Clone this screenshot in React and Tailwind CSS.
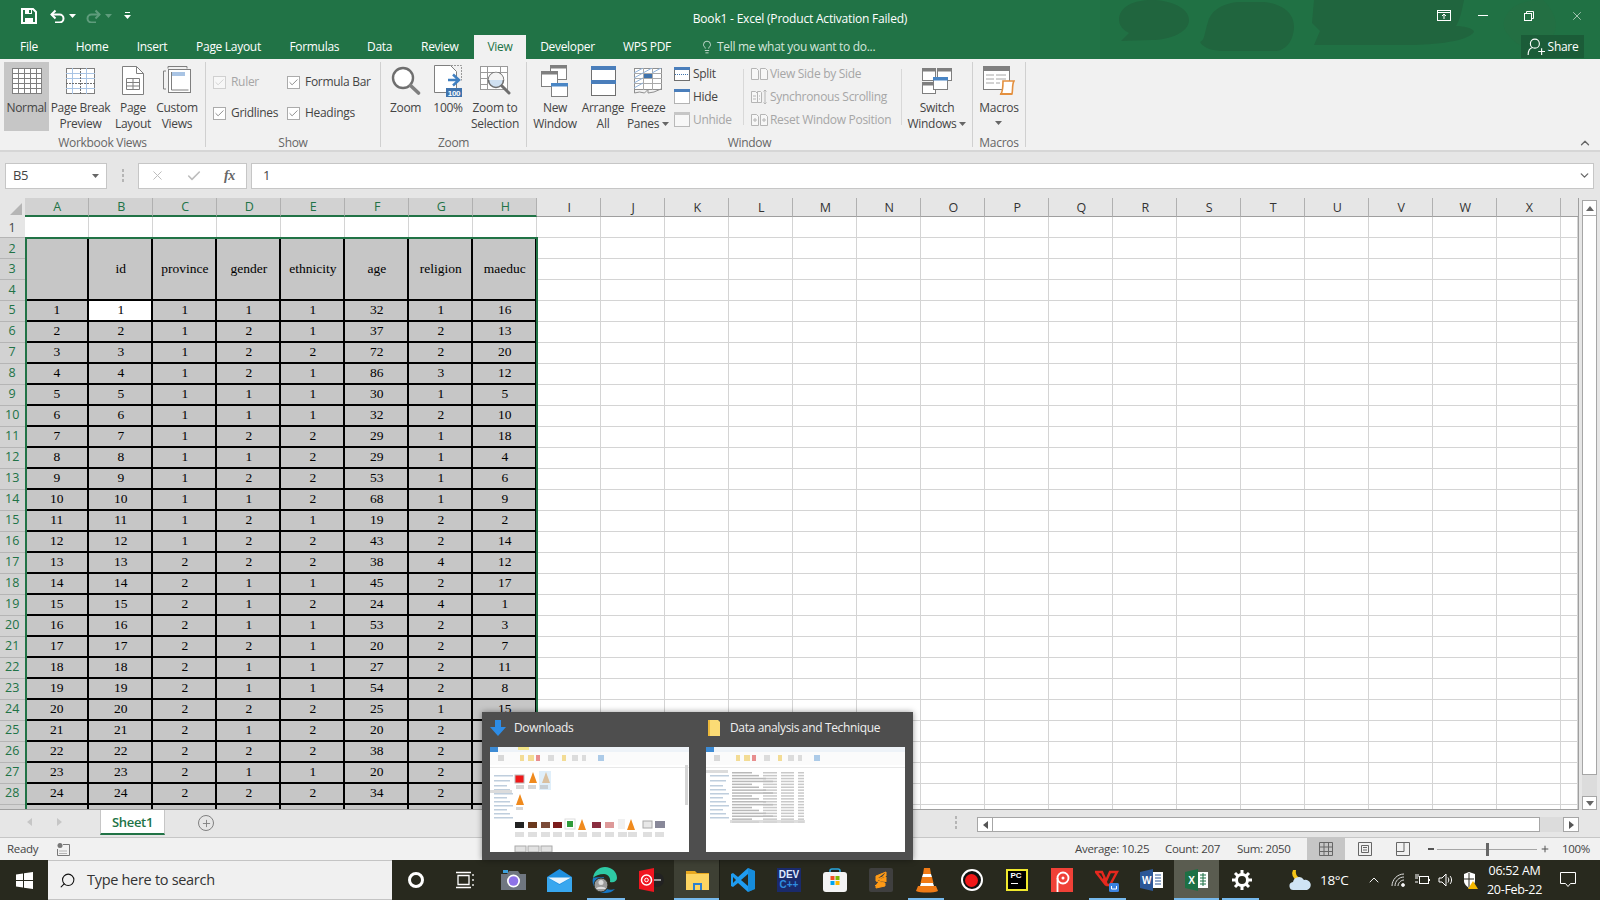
import React from "react";
import { Search, ChevronUp, ChevronDown, X, Check, Plus, Lightbulb } from "lucide-react";

const DATA = [
  [1,1,1,1,1,32,1,16],[2,2,1,2,1,37,2,13],[3,3,1,2,2,72,2,20],[4,4,1,2,1,86,3,12],[5,5,1,1,1,30,1,5],
  [6,6,1,1,1,32,2,10],[7,7,1,2,2,29,1,18],[8,8,1,1,2,29,1,4],[9,9,1,2,2,53,1,6],[10,10,1,1,2,68,1,9],
  [11,11,1,2,1,19,2,2],[12,12,1,2,2,43,2,14],[13,13,2,2,2,38,4,12],[14,14,2,1,1,45,2,17],[15,15,2,1,2,24,4,1],
  [16,16,2,1,1,53,2,3],[17,17,2,2,1,20,2,7],[18,18,2,1,1,27,2,11],[19,19,2,1,1,54,2,8],[20,20,2,2,2,25,1,15],
  [21,21,2,1,2,20,2,""],[22,22,2,2,2,38,2,""],[23,23,2,1,1,20,2,""],[24,24,2,2,2,34,2,""],["","","","","","","",""],
];
const HEAD = ["", "id", "province", "gender", "ethnicity", "age", "religion", "maeduc"];
const COLS_SEL = "ABCDEFGH".split("");
const COLS = "IJKLMNOPQRSTUVWX".split("");

const Caret = ({ className = "" }) => (
  <svg width="7" height="4" viewBox="0 0 7 4" className={className}><path d="M0 0h7L3.5 4z" fill="currentColor" /></svg>
);

const Win = ({ x, y, w, h, head = "#7f7f7f", hh = 3.5, stroke = "#7f7f7f", fill = "#fff" }) => (
  <g>
    <rect x={x + 0.5} y={y + 0.5} width={w} height={h} fill={fill} stroke={stroke} />
    <rect x={x} y={y} width={w + 1} height={hh} fill={head} />
  </g>
);

const IconNormal = () => (
  <svg width="30" height="26" viewBox="0 0 30 26" fill="none" stroke="#7f7f7f">
    <rect x=".5" y=".5" width="29" height="25" fill="#fff" />
    {[5.5, 10.5, 15.5, 20.5].map((y) => <path key={y} d={`M0 ${y}h30`} />)}
    {[6.5, 12.5, 18.5, 24.5].map((x) => <path key={x} d={`M${x} 0v26`} />)}
  </svg>
);
const IconBreak = () => (
  <svg width="29" height="26" viewBox="0 0 29 26" fill="none">
    <rect x=".5" y=".5" width="28" height="25" fill="#fff" stroke="#7f7f7f" />
    {[5.5, 10.5, 20.5].map((y) => <path key={y} d={`M0 ${y}h29`} stroke="#a9c4e4" />)}
    {[6.5, 20.5].map((x) => <path key={x} d={`M${x} 0v26`} stroke="#a9c4e4" />)}
    <path d="M14.5 0v26" stroke="#6d6d6d" strokeDasharray="2 1" />
    <path d="M0 15.5h29" stroke="#6d6d6d" strokeDasharray="2 1" />
  </svg>
);
const IconPage = () => (
  <svg width="22" height="29" viewBox="0 0 22 29" fill="none" stroke="#7f7f7f">
    <path d="M.5.5h14l7 7v21H.5z" fill="#fff" />
    <path d="M14.5.5v7h7" />
    <path d="M4.5 12.5h13v11h-13zM4.5 16.5h13M4.5 20h13M11 12.5v11" />
  </svg>
);
const IconCustom = () => (
  <svg width="29" height="29" viewBox="0 0 29 29" fill="none" stroke="#7f7f7f">
    <path d="M.5 5v18M3 5H.5M3 23H.5M5 .5h19M5 .5v2M24 .5v2" />
    <rect x="5.5" y="3.5" width="22" height="23" fill="#fff" />
    <rect x="8" y="6" width="14" height="4" fill="#a9c4e4" stroke="none" />
    <path d="M8.5 6v18h17" />
  </svg>
);
const IconMag = () => (
  <svg width="30" height="29" viewBox="0 0 30 29" fill="none">
    <circle cx="12" cy="12" r="10" stroke="#6f6f6f" strokeWidth="2.4" fill="#fff" />
    <path d="M19.5 19.5l8 7.5" stroke="#7f7f7f" strokeWidth="3.6" strokeLinecap="round" />
  </svg>
);
const Icon100 = () => (
  <svg width="29" height="32" viewBox="0 0 29 32">
    <path d="M.5.5h16l6 6v21H.5z" fill="#fff" stroke="#7f7f7f" />
    <path d="M17 .5h10.5v15" fill="none" stroke="#9a9a9a" strokeDasharray="2 1" />
    <path d="M14 15h10M19 9.5l6 5.5-6 5.5" fill="none" stroke="#3f7fc1" strokeWidth="2.5" />
    <rect x="12" y="23" width="16" height="9" fill="#3f73ad" />
    <text x="20" y="30.5" fontSize="8" fontWeight="700" fill="#fff" textAnchor="middle" fontFamily="Liberation Sans">100</text>
  </svg>
);
const IconZoomSel = () => (
  <svg width="31" height="29" viewBox="0 0 31 29" fill="none" stroke="#9a9a9a">
    <rect x=".5" y=".5" width="27" height="23" fill="#fff" />
    <path d="M0 6.5h28M0 12.5h8M0 18.5h8M7.5 0v24M20.5 0v8" />
    <circle cx="16" cy="14" r="7.5" fill="#cfe0f1" stroke="#6f6f6f" strokeWidth="1.6" />
    <path d="M8.5 14a7.5 7.5 0 0 1 15 0z" fill="#f4f4f4" stroke="none" />
    <path d="M22 20l7 7" stroke="#6f6f6f" strokeWidth="3" strokeLinecap="round" />
  </svg>
);
const IconNewWin = () => (
  <svg width="28" height="32" viewBox="0 0 28 32">
    <Win x={9} y={0} w={16} h={14} head="#7f7f7f" />
    <Win x={0} y={6} w={16} h={15} head="#7f7f7f" />
    <Win x={10} y={18} w={16} h={13} head="#4a86c5" />
  </svg>
);
const IconArrange = () => (
  <svg width="25" height="30" viewBox="0 0 25 30">
    <Win x={0} y={0} w={24} h={14} head="#4a7ebb" hh={4} stroke="#6f6f6f" />
    <Win x={0} y={14} w={24} h={15} head="#4a7ebb" hh={4} stroke="#6f6f6f" />
  </svg>
);
const IconFreeze = () => (
  <svg width="28" height="26" viewBox="0 0 28 26" fill="none">
    <rect x=".5" y=".5" width="27" height="21" fill="#fff" stroke="#8f8f8f" />
    {[5.5, 10.5, 15.5].map((y) => <path key={y} d={`M0 ${y}h28`} stroke="#a9a9a9" />)}
    {[9.5, 18.5].map((x) => <path key={x} d={`M${x} 0v22`} stroke="#a9a9a9" />)}
    <path d="M0 5l9-5M0 10l9-5M0 15l9-5M0 20l9-5M9 5l9-5M18 5l9-5" stroke="#8fb1d8" />
    <rect x="10" y="6" width="8" height="4" fill="#3f73ad" />
    <path d="M.5 21v4l5-1 5 1 3-3M14 21v4l6-1 7-3" stroke="#8f8f8f" />
  </svg>
);
const IconSplit = () => (
  <svg width="16" height="14" viewBox="0 0 16 14">
    <rect x=".5" y=".5" width="15" height="13" fill="#fff" stroke="#6f6f6f" />
    <rect width="16" height="3" fill="#4a7ebb" />
    <path d="M1 7.5h14" stroke="#3f73ad" strokeDasharray="1 1" />
  </svg>
);
const IconHide = () => (
  <svg width="16" height="15" viewBox="0 0 16 15">
    <rect x=".5" y=".5" width="15" height="14" fill="#fff" stroke="#6f6f6f" strokeDasharray="1 1" />
    <rect width="16" height="3" fill="#4a7ebb" />
  </svg>
);
const IconUnhide = () => (
  <svg width="16" height="15" viewBox="0 0 16 15">
    <rect x=".5" y=".5" width="15" height="14" fill="#f7f7f7" stroke="#b9b9b9" />
    <rect width="16" height="3" fill="#c6c6c6" />
  </svg>
);
const IconSide = () => (
  <svg width="17" height="12" viewBox="0 0 17 12" fill="#f7f7f7" stroke="#b5b5b5">
    <path d="M.5.5h5l2 2v9h-7zM9.5.5h5l2 2v9h-7z" />
  </svg>
);
const IconSync = () => (
  <svg width="16" height="16" viewBox="0 0 16 16" fill="#f7f7f7" stroke="#b5b5b5">
    <path d="M.5 2.5h4l2 2v9h-6zM6.5 2.5h3l1 1v10h-4zM2 7h3M2 10h3M8 7h1M8 10h1" />
    <path d="M14 1v14M12.5 2.5L14 1l1.5 1.5M12.5 13.5L14 15l1.5-1.5" fill="none" />
  </svg>
);
const IconReset = () => (
  <svg width="17" height="12" viewBox="0 0 17 12" fill="#f7f7f7" stroke="#b5b5b5">
    <path d="M.5.5h5l2 2v9h-7zM9.5.5h5l2 2v9h-7zM2 6h4M4 4v4M11 6h4M13 4v4" />
  </svg>
);
const IconSwitch = () => (
  <svg width="30" height="26" viewBox="0 0 30 26">
    <Win x={0} y={0} w={13} h={12} />
    <Win x={15} y={0} w={14} h={12} />
    <Win x={0} y={14} w={13} h={11} />
    <Win x={11} y={9} w={14} h={12} head="#4a86c5" />
  </svg>
);
const IconMacros = () => (
  <svg width="32" height="29" viewBox="0 0 32 29">
    <rect x=".5" y=".5" width="26" height="23" fill="#fff" stroke="#7f7f7f" />
    <rect width="27" height="5" fill="#7f7f7f" />
    <path d="M3 9h8M13 9h10M3 13h8M13 13h10M3 17h8M13 17h4" stroke="#a6a6a6" />
    <path d="M20 15h11c-2 3-1 8-2 13H18c2-3 2-9 2-13z" fill="#fff" stroke="#e3903f" strokeWidth="1.6" />
    <path d="M17 27h12v2H17z" fill="#e3903f" />
  </svg>
);

const Big = ({ w, icon, lines, active, caret }) => (
  <div style={{ width: w }} className={`flex flex-col items-center h-[69px] shrink-0 ${active ? "bg-[#c6c6c6]" : ""}`}>
    <div className="h-[38px] shrink-0 flex items-center justify-center pb-[1px]">{icon}</div>
    <div className="text-center leading-[16px] whitespace-nowrap shrink-0">
      {lines.map((l, i) => <div key={i} className="flex items-center justify-center gap-[3px] h-[16px]">{l}{caret && i === lines.length - 1 ? <Caret className="text-[#666]" /> : null}</div>)}
    </div>
  </div>
);

const Group = ({ w, label, children }) => (
  <div style={{ width: w }} className="flex flex-col shrink-0 h-[85px] border-r border-[#d0d0d0]">
    <div className="flex shrink-0 h-[72px]">{children}</div>
    <div className="mt-[1px] shrink-0 h-[16px] text-center text-[#666] leading-[16px]">{label}</div>
  </div>
);

const CheckRow = ({ label, on = true, dim, w }) => (
  <div style={{ width: w }} className={`h-[18px] flex items-center gap-[5px] ${dim ? "text-[#a6a6a6]" : ""}`}>
    <span className={`w-[13px] h-[13px] border ${dim ? "border-[#d0d0d0] bg-[#f7f7f7]" : "border-[#ababab] bg-white"} flex items-center justify-center`}>
      {on && <Check size={11} strokeWidth={1.6} className={dim ? "text-[#c6c6c6]" : "text-[#666]"} />}
    </span>
    <span className="whitespace-nowrap">{label}</span>
  </div>
);

const SmallRow = ({ icon, label, dim, iw = 19 }) => (
  <div className={`h-[23px] flex items-center whitespace-nowrap ${dim ? "text-[#a6a6a6]" : ""}`}>
    <span style={{ width: iw }} className="flex items-center shrink-0">{icon}</span>{label}
  </div>
);

const TABS = [
  ["Home", 68], ["Insert", 52], ["Page Layout", 101], ["Formulas", 70.6], ["Data", 60], ["Review", 60.4],
];

const Blobs = () => (
  <svg className="absolute left-0 top-0 pointer-events-none" width="1600" height="59" viewBox="0 0 1600 59">
    <rect x="1100" width="500" height="59" fill="#1f6c41" opacity=".35" />
    <path d="M1119 20c0-14 16-20 32-20 20 0 38 8 38 20 0 12-18 20-38 20l-30 1 8-8c-6-3-10-8-10-13z" fill="#20653e" />
    <path d="M1208 22c3-12 16-20 34-20h18c20 0 34 10 34 24 0 12-6 24-18 25h-50c-12 0-22-2-26-9 5-2 4-8 8-20z" fill="#20653e" />
    <path d="M1314 0h150c-2 10-4 20-8 26 6 0 18 2 18 6-8 11-48 13-68 13h-92l6-14-8-8z" fill="#20653e" />
    <path d="M1505 18c6-14 20-18 38-18 12 12 16 24 10 36-8 16-30 14-40 4-6-6-12-12-8-22z" fill="#236f43" />
  </svg>
);

const TitleBar = () => (
  <div className="relative h-[59px] bg-[#217346] text-white shrink-0">
    <Blobs />
    <div className="relative h-[35px] flex items-center justify-center text-[12px] pt-[2px]">
      <div className="absolute left-0 top-0 h-[31px] flex items-center">
        <svg className="ml-[21px]" width="16" height="16" viewBox="0 0 16 16"><path d="M1 1h11l3 3v11H1z" fill="none" stroke="#fff" strokeWidth="2" /><path d="M4 1h7v5H4zM4 10h8v5H4z" fill="#fff" /><path d="M8 2h2v3H8z" fill="#217346" /></svg>
        <svg className="ml-[13px]" width="15" height="14" viewBox="0 0 15 14" fill="none" stroke="#fff" strokeWidth="2"><path d="M1.5 5.5h8a4 4 0 0 1 0 8H5" /><path d="M5.5 1.5l-4 4 4 4" /></svg>
        <Caret className="ml-[4px] text-white" />
        <svg className="ml-[10px]" width="15" height="14" viewBox="0 0 15 14" fill="none" stroke="#5f9c7c" strokeWidth="2"><path d="M13.5 5.500h-8a4 4 0 0 0 0 8H10" /><path d="M9.500 1.500l4 4-4 4" /></svg>
        <Caret className="ml-[4px] text-[#5f9c7c]" />
        <svg className="ml-[12px]" width="7" height="8" viewBox="0 0 7 8" fill="#fff"><path d="M1 0h5v1H1zM0 3h7L3.500 7z" /></svg>
      </div>
      <span className="tracking-[-0.2px]">Book1 - Excel (Product Activation Failed)</span>
      <div className="absolute right-0 top-0 h-[31px] flex items-center">
        <svg className="mr-[27px]" width="14" height="11" viewBox="0 0 14 11" fill="none" stroke="#fff"><rect x=".5" y=".5" width="13" height="10" /><path d="M1 2.500h12M7 9V4M5 6l2-2 2 2" /></svg>
        <span className="w-[10px] h-px bg-white mr-[36px]" />
        <svg className="mr-[36px]" width="10" height="10" viewBox="0 0 10 10" fill="none" stroke="#fff"><rect x=".5" y="2.500" width="7" height="7" /><path d="M2.500 2.500v-2h7v7h-2" /></svg>
        <X size={14} strokeWidth={1} className="mr-[16px]" />
      </div>
    </div>
    <div className="relative h-[24px] flex items-stretch text-[12px]">
      <div className="w-[58px] flex items-center justify-center">File</div>
      {TABS.map(([t, w]) => <div key={t} style={{ width: w }} className="flex items-center justify-center">{t}</div>)}
      <div className="ml-[4px] w-[52px] bg-[#f1f1f1] text-[#217346] flex items-center justify-center">View</div>
      <div className="w-[83px] flex items-center justify-center">Developer</div>
      <div className="w-[76px] flex items-center justify-center">WPS PDF</div>
      <div className="ml-[15px] flex items-center gap-[3px] text-[#d5e6dc]">
        <Lightbulb size={14} strokeWidth={1.2} className="text-white" />
        <span>Tell me what you want to do...</span>
      </div>
      <div className="absolute left-[1521px] top-0 w-[63px] h-[23px] bg-[#1b5c38] flex items-center justify-center gap-[3px] pt-[1px]">
        <svg width="18" height="18" viewBox="0 0 16 16" fill="none" stroke="#fff"><circle cx="7" cy="5" r="4" /><path d="M1 15c0-4 2-6 4-6.500M10 12h6M13 9v6" /></svg>
        <span>Share</span>
      </div>
    </div>
  </div>
);

const Ribbon = () => (
  <div className="h-[93px] shrink-0 bg-[#f1f1f1] border-b-2 border-[#d6d6d6] flex pt-[3px] text-[12px] text-[#444] relative">
    <Group w={206} label="Workbook Views">
      <span className="w-[4px] shrink-0" />
      <Big w={45} active icon={<IconNormal />} lines={["Normal"]} />
      <Big w={63} icon={<IconBreak />} lines={["Page Break", "Preview"]} />
      <Big w={42} icon={<IconPage />} lines={["Page", "Layout"]} />
      <Big w={46} icon={<IconCustom />} lines={["Custom", "Views"]} />
    </Group>
    <Group w={175} label="Show">
      <div className="pl-[7px] pt-[11px] flex flex-col gap-[13px]">
        <CheckRow label="Ruler" dim w={74} />
        <CheckRow label="Gridlines" w={74} />
      </div>
      <div className="pt-[11px] flex flex-col gap-[13px]">
        <CheckRow label="Formula Bar" />
        <CheckRow label="Headings" />
      </div>
    </Group>
    <Group w={146} label="Zoom">
      <span className="w-[2px] shrink-0" />
      <Big w={45} icon={<IconMag />} lines={["Zoom"]} />
      <Big w={40} icon={<Icon100 />} lines={["100%"]} />
      <Big w={54} icon={<IconZoomSel />} lines={["Zoom to", "Selection"]} />
    </Group>
    <Group w={446} label="Window">
      <span className="w-[3px] shrink-0" />
      <Big w={50} icon={<IconNewWin />} lines={["New", "Window"]} />
      <Big w={46} icon={<IconArrange />} lines={["Arrange", "All"]} />
      <Big w={44} icon={<IconFreeze />} lines={["Freeze", "Panes"]} caret />
      <div className="w-[73px] pl-[4px] shrink-0">
        <SmallRow icon={<IconSplit />} label="Split" />
        <SmallRow icon={<IconHide />} label="Hide" />
        <SmallRow icon={<IconUnhide />} label="Unhide" dim />
      </div>
      <div className="w-[158px] shrink-0 border-l border-[#d8d8d8] h-[56px] mt-[7px] pl-[7px]">
        <div className="-mt-[7px]">
          <SmallRow icon={<IconSide />} label="View Side by Side" dim />
          <SmallRow icon={<IconSync />} label="Synchronous Scrolling" dim />
          <SmallRow icon={<IconReset />} label="Reset Window Position" dim />
        </div>
      </div>
      <div className="border-l border-[#d8d8d8] h-[56px] mt-[7px] pl-[5px]">
        <div className="-mt-[7px]"><Big w={60} icon={<IconSwitch />} lines={["Switch", "Windows"]} caret /></div>
      </div>
    </Group>
    <Group w={53} label="Macros">
      <Big w={52} icon={<IconMacros />} lines={["Macros", ""]} />
    </Group>
    <ChevronUp size={14} strokeWidth={2.2} className="absolute left-[1578px] top-[77px] text-[#666]" />
    <Caret className="absolute left-[995px] top-[62px] text-[#666]" />
  </div>
);

const FormulaBar = () => (
  <div className="h-[46px] shrink-0 bg-[#e6e6e6] flex items-center text-[13px] text-[#444] pt-[1px]">
    <div className="ml-[5px] w-[102px] h-[26px] bg-white border border-[#c6c6c6] flex items-center justify-between pl-[7px] pr-[7px]">
      <span>B5</span><Caret className="text-[#666]" />
    </div>
    <div className="w-[31px] flex flex-col items-center gap-[2px]">
      <span className="w-[2px] h-[3px] bg-[#b5b5b5]" /><span className="w-[2px] h-[3px] bg-[#b5b5b5]" /><span className="w-[2px] h-[3px] bg-[#b5b5b5]" />
    </div>
    <div className="w-[109px] h-[26px] bg-white border border-[#c6c6c6] flex items-center justify-between pl-[11px] pr-[11px] shrink-0">
      <X size={15} strokeWidth={1.6} className="text-[#bdbdbd]" />
      <Check size={16} strokeWidth={2.4} className="text-[#bdbdbd]" />
      <span className="font-['Liberation_Serif',serif] italic font-bold text-[#666] text-[14px]">fx</span>
    </div>
    <div className="ml-[4px] flex-1 h-[26px] bg-white border border-[#c6c6c6] flex items-center pl-[11px] mr-[6px] relative">
      <span>1</span>
      <ChevronDown size={13} strokeWidth={2.4} className="absolute right-[2px] text-[#666]" />
    </div>
  </div>
);

const Grid = () => <div className="border-r border-b border-[#d4d4d4] bg-white" />;

const Sheet = () => {
  const filler = (r) => Array.from({ length: 17 }, (_, i) => <Grid key={`${r}-${i}`} />);
  const RowH = ({ n, sel = true, pt = "" }) => (
    <div className={`flex items-center justify-center border-b border-[#b5b5b5] pr-[1px] text-[12.5px] tracking-normal ${pt} ${sel ? "bg-[#d2d2d2] text-[#217346]" : "bg-[#e6e6e6] text-[#444]"}`}>{n}</div>
  );
  const cellCls = "flex items-center justify-center pl-[1px] border-r-2 border-b-2 border-black font-['Liberation_Serif',serif] text-[13.5px] tracking-normal text-black";
  return (
    <div className="h-[612px] shrink-0 bg-[#e6e6e6] flex overflow-hidden">
      <div className="relative w-[1578.5px] h-[612px] overflow-hidden border-r border-b border-[#9f9f9f] shrink-0">
        <div className="grid grid-cols-[25.3px_repeat(24,64px)_17px] grid-rows-[18.5px_repeat(29,21px)] w-max">
          <div className="relative bg-[#e6e6e6]">
            <svg className="absolute left-[10px] top-[5px]" width="12" height="12" viewBox="0 0 12 12"><path d="M12 0v12H0z" fill="#b5b5b5" /></svg>
          </div>
          {COLS_SEL.map((c) => (
            <div key={c} className="flex items-center justify-center pl-[1px] pt-[3px] bg-[#d2d2d2] text-[#217346] text-[12.5px] tracking-normal border-r border-[#b0b0b0] border-b-2 border-b-[#217346]">{c}</div>
          ))}
          {COLS.map((c) => (
            <div key={c} className="flex items-center justify-center pl-[1px] pt-[3px] bg-[#e6e6e6] text-[#333] text-[12.5px] tracking-normal border-r border-[#b0b0b0] border-b border-b-[#9f9f9f]">{c}</div>
          ))}
          <div className="bg-[#e6e6e6] border-b border-[#9f9f9f]" />

          <RowH n={1} sel={false} pt="pt-[3px]" />
          {COLS_SEL.map((c) => <Grid key={`r1${c}`} />)}
          {filler("r1")}

          <RowH n={2} pt="pt-[3px]" />
          {HEAD.map((h, i) => (
            <div key={i} className={`row-span-3 bg-[#c6c6c6] ${cellCls} pt-[2px]`}>{h}</div>
          ))}
          {filler("r2")}
          <RowH n={3} pt="pt-[2px]" />
          {filler("r3")}
          <RowH n={4} pt="pt-[2px]" />
          {filler("r4")}

          {DATA.map((row, r) => (
            <React.Fragment key={r}>
              <RowH n={r + 5 === 29 ? "" : r + 5} />
              {row.map((v, c) => (
                <div key={c} className={`${cellCls} ${r === 0 && c === 1 ? "bg-white" : "bg-[#c6c6c6]"}`}>{v}</div>
              ))}
              {filler(`d${r}`)}
            </React.Fragment>
          ))}
        </div>
        <div className="absolute left-[25px] top-[39px] w-[513px] h-[600px] border-2 border-[#217346] pointer-events-none" />
      </div>
      <div className="w-[21.5px] h-[612px] flex flex-col items-start pt-[2px] pl-[3.5px]">
        <div className="w-[15px] h-[16px] bg-white border border-[#a6a6a6] flex items-center justify-center text-[#666]"><svg width="8" height="5" viewBox="0 0 8 5"><path d="M0 5h8L4 0z" fill="currentColor" /></svg></div>
        <div className="w-[15px] h-[559px] bg-white border-x border-b border-[#a6a6a6]" />
        <div className="w-[15px] h-[21px] bg-[#dcdcdc]" />
        <div className="w-[15px] h-[14px] bg-white border border-[#a6a6a6] flex items-center justify-center text-[#666]"><svg width="8" height="5" viewBox="0 0 8 5"><path d="M0 0h8L4 5z" fill="currentColor" /></svg></div>
      </div>
    </div>
  );
};

const SheetBar = () => (
  <div className="h-[28px] shrink-0 bg-[#e6e6e6] border-b border-[#c6c6c6] flex text-[13px]">
    <div className="w-[100px] flex items-center pl-[27px] gap-[25px] pb-[3px] text-[#c6c6c6]">
      <svg width="5" height="8" viewBox="0 0 5 8"><path d="M5 0v8L0 4z" fill="currentColor" /></svg>
      <svg width="5" height="8" viewBox="0 0 5 8"><path d="M0 0v8l5-4z" fill="currentColor" /></svg>
    </div>
    <div className="w-[65px] h-[25px] bg-white border-x border-[#c6c6c6] border-b-2 border-b-[#217346] flex items-center justify-center pt-[2px] font-semibold text-[#217346]">Sheet1</div>
    <div className="ml-[33px] mt-[5px] w-[16px] h-[16px] rounded-full border border-[#808080] flex items-center justify-center text-[#808080]"><Plus size={11} strokeWidth={2} /></div>
    <div className="ml-[734px] w-[16px] flex flex-col items-center justify-center gap-[2px] pb-[3px]">
      <span className="w-[2px] h-[3px] bg-[#b5b5b5]" /><span className="w-[2px] h-[3px] bg-[#b5b5b5]" /><span className="w-[2px] h-[3px] bg-[#b5b5b5]" />
    </div>
    <div className="ml-[13px] mt-[7px] h-[15px] flex w-[602px]">
      <div className="w-[16px] bg-white border border-[#a6a6a6] flex items-center justify-center text-[#555]"><svg width="5" height="8" viewBox="0 0 5 8"><path d="M5 0v8L0 4z" fill="currentColor" /></svg></div>
      <div className="w-[547px] bg-white border-y border-r border-[#a6a6a6]" />
      <div className="w-[23px] bg-[#dcdcdc]" />
      <div className="w-[16px] bg-white border border-[#a6a6a6] flex items-center justify-center text-[#555]"><svg width="5" height="8" viewBox="0 0 5 8"><path d="M0 0v8l5-4z" fill="currentColor" /></svg></div>
    </div>
  </div>
);

const StatusBar = () => (
  <div className="h-[22px] shrink-0 bg-[#f1f1f1] flex items-center text-[11.5px] text-[#444]">
    <span className="ml-[7px] w-[50px]">Ready</span>
    <svg width="13" height="13" viewBox="0 0 13 13" fill="none" stroke="#777"><circle cx="3" cy="2.500" r="2.500" fill="#777" stroke="none" /><path d="M6 1.500h6.500v11H.5V6" /><path d="M2.500 8h8M2.500 10.500h8" strokeDasharray="1 1" /></svg>
    <span className="ml-[1005px] w-[90px] whitespace-nowrap">Average: 10.25</span>
    <span className="w-[72px] whitespace-nowrap">Count: 207</span>
    <span className="w-[70px] whitespace-nowrap">Sum: 2050</span>
    <div className="w-[38px] h-[22px] bg-[#c6c6c6] flex items-center justify-center">
      <svg width="14" height="14" viewBox="0 0 14 14" fill="none" stroke="#666"><path d="M.5.5h13v13H.5zM.5 5h13M.5 9.500h13M5 .5v13M9.500.5v13" /></svg>
    </div>
    <div className="w-[39px] flex justify-center">
      <svg width="14" height="14" viewBox="0 0 14 14" fill="none" stroke="#666"><path d="M.5.5h13v13H.5zM3.500 3.500h7v7h-7zM5 5.500h4M5 8h4" /></svg>
    </div>
    <div className="w-[37px] flex justify-center">
      <svg width="14" height="14" viewBox="0 0 14 14" fill="none" stroke="#666"><path d="M.5.5h13v13H.5zM.5 9.500h7.500V.5" /></svg>
    </div>
    <span className="ml-[7px] w-[6px] h-[2px] bg-[#555]" />
    <div className="relative ml-[3px] w-[100px] h-px bg-[#a6a6a6]"><span className="absolute left-[49px] -top-[6px] w-[3px] h-[13px] bg-[#666]" /></div>
    <Plus size={10} strokeWidth={2.4} className="ml-[3px] text-[#555]" />
    <span className="ml-[12px]">100%</span>
  </div>
);

const Mini = ({ kind }) => (
  <svg width="199" height="105" viewBox="0 0 199 105" className="bg-white block">
    <g className="blur-[0.4px]">
      <rect width="199" height="5" fill="#eef3f8" />
      <rect y="0" width="8" height="5" fill="#3d8bd4" />
      {kind === 0 && <rect x="28" y="0" width="11" height="3" fill="#f3e58a" />}
      <rect y="5" width="199" height="13" fill="#fbfbfb" />
      {[8, 30, 38, 46, 58, 72, 82, 92, 108].map((x, i) => <rect key={i} x={x} y={8} width={i % 2 ? 4 : 6} height={6} fill={["#c9c9c9", "#efcf6a", "#efcf6a", "#e06060", "#cfcfcf", "#efcf6a", "#cfcfcf", "#cfcfcf", "#8bb7e0"][i]} opacity=".7" />)}
      <rect y="20" width="199" height="1" fill="#e8e8e8" />
      {[26, 31, 36, 40, 44, 48, 52, 56, 60, 64, 68].map((y) => <rect key={y} x={4} y={y + 2} width={13 + (y % 3) * 3} height="1.500" fill="#a9bdd1" opacity=".75" />)}
      <rect x="0" y={kind === 0 ? 43 : 23} width="22" height="3" fill="#dcdcdc" />
      {kind === 0 ? (
        <g>
          <rect x="25" y="28" width="9" height="8" fill="#f01818" stroke="#bbb" />
          <path d="M43 25l4 11h-8z" fill="#f08a1d" /><path d="M56 25l4 11h-8z" fill="#f08a1d" />
          <rect x="49" y="24" width="12" height="19" fill="#cce4f7" opacity=".6" />
          <path d="M30 47l4 11h-8z" fill="#f08a1d" />
          {[26, 38, 50].map((x) => <rect key={x} x={x} y={38} width="8" height="4" fill="#b5b5b5" opacity=".55" />)}
          <rect x="26" y="60" width="7" height="3" fill="#b5b5b5" opacity=".55" />
          {[25, 38, 51, 63].map((x, i) => <rect key={x} x={x} y={75} width="9" height="6" fill={["#222", "#6b3a1e", "#7b4b38", "#7c1c1c"][i]} />)}
          <rect x="75" y="72" width="10" height="10" fill="#fff" stroke="#ddd" /><rect x="77" y="74" width="6" height="6" fill="#2f9b3b" />
          <path d="M92 72l4 11h-8z" fill="#f08a1d" />
          <rect x="102" y="75" width="9" height="6" fill="#8a2d3f" /><rect x="115" y="75" width="9" height="6" fill="#d99" />
          <rect x="128" y="72" width="7" height="10" fill="#f0f0f0" />
          <path d="M141 72l4 11h-8z" fill="#f08a1d" />
          <rect x="153" y="74" width="9" height="7" fill="#e8e8e8" stroke="#aaa" /><rect x="165" y="74" width="10" height="7" fill="#889" />
          {[25, 38, 51, 63, 75, 88, 102, 115, 128, 138, 153, 165].map((x) => <rect key={x} x={x} y={85} width="9" height="5" fill="#b9b9b9" opacity=".45" />)}
          {[30, 43, 56].map((x) => <rect key={x} x={x - 5} y={99} width="11" height="6" fill="#e2e2e2" stroke="#aaa" />)}
          <rect x="195" y="18" width="3" height="40" fill="#d5d5d5" />
        </g>
      ) : (
        <g>
          {Array.from({ length: 18 }, (_, i) => (
            <g key={i}>
              <rect x="26" y={25 + i * 2.900} width={20 + (i * 7) % 28} height="1.500" fill="#a8a8a8" opacity=".8" />
              <rect x="57" y={25 + i * 2.900} width="14" height="1.500" fill="#bbb" opacity=".8" />
              <rect x="75" y={25 + i * 2.900} width="13" height="1.500" fill="#bbb" opacity=".8" />
              <rect x="92" y={25 + i * 2.900} width="6" height="1.500" fill="#bbb" opacity=".8" />
            </g>
          ))}
          <rect x="24" y="73" width="75" height="3" fill="#d6d6d6" opacity=".8" />
        </g>
      )}
    </g>
  </svg>
);

const Flyout = () => (
  <div className="absolute left-[482px] top-[712px] w-[431px] h-[148px] bg-[#4e4e4e] shadow-[0_0_6px_rgba(0,0,0,0.4)] text-[#f0f0f0] text-[12px] tracking-[-0.35px] flex gap-[17px] px-[8px]">
    <div className="w-[199px]">
      <div className="h-[35px] pb-[3px] flex items-center gap-[8px]">
        <svg width="16" height="16" viewBox="0 0 16 16"><path d="M5 0h6v7h5l-8 9-8-9h5z" fill="#2d8ce6" /></svg>
        <span>Downloads</span>
      </div>
      <Mini kind={0} />
    </div>
    <div className="w-[199px]">
      <div className="h-[35px] pb-[3px] flex items-center gap-[10px] pl-[2px]">
        <svg width="12" height="16" viewBox="0 0 12 16"><path d="M0 0h10l2 2v14H0z" fill="#fbdb75" /><path d="M0 0h2v16H0z" fill="#edb93a" /></svg>
        <span>Data analysis and Technique</span>
      </div>
      <Mini kind={1} />
    </div>
  </div>
);

const Slot = ({ children, w = 46, bg }) => (
  <div style={{ width: w }} className={`relative h-[40px] flex items-center justify-center shrink-0 ${bg || ""}`}>
    {children}
  </div>
);

const Taskbar = () => (
  <div className="h-[40px] shrink-0 bg-[#28291e] flex items-stretch text-white">
    <div className="w-[48px] flex items-center justify-center">
      <svg width="17" height="17" viewBox="0 0 17 17" fill="#fff"><path d="M0 2.400L7 1.400v6.600H0zM8 1.200L17 0v8H8zM0 9h7v6.600l-7-1zM8 9h9v8l-9-1.200z" /></svg>
    </div>
    <div className="w-[344px] bg-[#f0f0f0] border-y border-[#c4c4c4] flex items-center text-[#333] text-[14.5px]">
      <Search size={17} strokeWidth={1.5} className="ml-[11px] -scale-x-100 text-[#111]" />
      <span className="ml-[11px]">Type here to search</span>
    </div>
    <Slot w={47}><span className="w-[16px] h-[16px] rounded-full border-[3px] border-white" /></Slot>
    <Slot w={51}>
      <svg width="18" height="18" viewBox="0 0 18 18" fill="none" stroke="#fff" strokeWidth="1.300"><path d="M2 4.500h11v9H2zM0 1.500h15M0 16.500h15M17 3v2M17 8v2M17 13v2" /></svg>
    </Slot>
    <Slot>
      <svg width="25" height="20" viewBox="0 0 25 20"><path d="M0 4h6l2-3h9l2 3h6v16H0z" fill="#6f7680" /><rect x="2" y="0" width="5" height="3" fill="#3ca0dc" /><circle cx="12.500" cy="11" r="6.500" fill="#fff" /><circle cx="12.500" cy="11" r="4.800" fill="#8e72e8" /></svg>
    </Slot>
    <Slot>
      <svg width="25" height="23" viewBox="0 0 25 23"><path d="M0 8L12.500 0 25 8v15H0z" fill="#1d8fe0" /><path d="M0 8l12.500 8L25 8v15H0z" fill="#38a7ef" /><path d="M1 8.500h23L12.500 15z" fill="#e8f4fd" /></svg>
    </Slot>
    <Slot>
      <svg width="26" height="26" viewBox="0 0 26 26"><path d="M1 11C2 4 7 0 13 0c7 0 12 5 12 11 0 3-3 5-7 4 1-4-2-8-6-8-5 0-9 2-11 4z" fill="#2ec9a4" /><path d="M1 11c-2 8 4 15 12 15 4 0 7-1 10-4-5 2-10 0-12-4-1-3 0-6 1-8-5 0-9 0-11 1z" fill="#1677c6" /><circle cx="9" cy="18" r="7" fill="#9a9a9a" stroke="#28291e" /><circle cx="9" cy="15.500" r="2.500" fill="#ddd" /><path d="M4 22c1-3 9-3 10 0z" fill="#ddd" /></svg>
      <span className="absolute bottom-0 left-[5px] right-[3px] h-[2px] bg-[#76b9ed]" />
    </Slot>
    <Slot>
      <svg width="25" height="24" viewBox="0 0 25 24"><circle cx="18" cy="12" r="7" fill="#222" /><rect x="15" y="11" width="7" height="2" fill="#999" /><path d="M0 3l15-3v24L0 21z" fill="#f01520" /><circle cx="7.500" cy="12" r="5" fill="none" stroke="#fff" strokeWidth="1.500" /><circle cx="7.500" cy="12" r="1.800" fill="none" stroke="#fff" /></svg>
    </Slot>
    <Slot bg="bg-[#3e4034]">
      <svg width="23" height="20" viewBox="0 0 23 20"><path d="M0 1h9l2 2h12v3H0z" fill="#e8a820" /><rect y="4" width="23" height="16" fill="#fcd462" /><path d="M7 13h9v7H7z" fill="#2d7fd0" /><path d="M9 15h5v5H9z" fill="#fcd462" /></svg>
      <span className="absolute bottom-0 left-0 right-0 h-[2px] bg-[#76b9ed]" />
      <span className="absolute top-0 bottom-0 right-0 w-px bg-[#1c1d15]" />
    </Slot>
    <Slot>
      <svg width="24" height="24" viewBox="0 0 24 24"><path d="M17 0l7 3v18l-7 3-10-9-5 4-2-1V6l2-1 5 4z" fill="#1f9cf0" /><path d="M17 6L10 12l7 6z" fill="#28291e" /><path d="M2 9v6l3-3z" fill="#28291e" /><path d="M17 0l7 3v18l-7 3z" fill="#0d7cc8" opacity=".5" /></svg>
    </Slot>
    <Slot>
      <div className="w-[24px] h-[24px] bg-[#1a2a6b] flex flex-col items-center justify-center leading-none tracking-normal">
        <span className="text-[10px] font-bold font-['Liberation_Sans',sans-serif] text-[#dfe9ff]">DEV</span>
        <span className="text-[10px] font-bold font-['Liberation_Sans',sans-serif] text-[#2f8ee0]">C++</span>
      </div>
    </Slot>
    <Slot>
      <svg width="24" height="24" viewBox="0 0 24 24"><path d="M7 5V3a2 2 0 0 1 2-2h6a2 2 0 0 1 2 2v2" fill="none" stroke="#27a7e0" strokeWidth="1.600" /><rect y="4" width="24" height="20" rx="3" fill="#f4f4f4" /><rect x="7.500" y="8" width="4" height="4" fill="#f25022" /><rect x="12.500" y="8" width="4" height="4" fill="#7fba00" /><rect x="7.500" y="13" width="4" height="4" fill="#00a4ef" /><rect x="12.500" y="13" width="4" height="4" fill="#ffb900" /></svg>
    </Slot>
    <Slot>
      <svg width="24" height="24" viewBox="0 0 24 24"><rect width="24" height="24" rx="2" fill="#3f3f3f" /><path d="M17 4L7 8v5l9 2v3L7 20v-3l-1 1M17 4v4L8 11M7 13l10-4v5" fill="#ff9a16" stroke="#ff9a16" /></svg>
    </Slot>
    <Slot w={45}>
      <svg width="22" height="25" viewBox="0 0 22 25"><path d="M8 0h6l1 6H7zM6 9h10l1.500 6h-13z" fill="#f07b16" /><path d="M7 6h8l1 3H6zM5 15h12l1 3H4z" fill="#fff" /><path d="M2 18h18l2 5c-4 2-18 2-22 0z" fill="#f07b16" /></svg>
      <span className="absolute bottom-0 left-[4px] right-[5px] h-[2px] bg-[#76b9ed]" />
    </Slot>
    <Slot w={45}>
      <span className="w-[22px] h-[22px] rounded-full bg-[#111] border-2 border-white flex items-center justify-center"><span className="w-[13px] h-[13px] rounded-full bg-[#f01818]" /></span>
    </Slot>
    <Slot w={45}>
      <div className="w-[22px] h-[22px] bg-black border-2 border-[#f0e92e] flex flex-col pl-[3px] pt-[1px] leading-none tracking-normal">
        <span className="text-[8px] font-bold font-['Liberation_Sans',sans-serif]">PC</span>
        <span className="w-[7px] h-px bg-white mt-[3px]" />
      </div>
    </Slot>
    <Slot w={45}>
      <svg width="22" height="24" viewBox="0 0 22 24"><rect width="22" height="24" fill="#f04137" /><circle cx="12" cy="10" r="5.500" fill="none" stroke="#fff" strokeWidth="1.800" /><circle cx="12" cy="10" r="1.500" fill="#fff" /><path d="M6.500 10v14" stroke="#fff" strokeWidth="1.800" /></svg>
    </Slot>
    <Slot w={45}>
      <svg width="24" height="24" viewBox="0 0 24 24"><path d="M1 4h6l4 9 4-9h7l-7 13h-3L9 10 11 17z" fill="none" stroke="#e6281e" strokeWidth="2.400" /><rect x="14" y="15" width="10" height="9" rx="1.500" fill="#3b82e0" /><path d="M16.500 18v3h5v-3" stroke="#fff" fill="none" /></svg>
      <span className="absolute bottom-0 left-[5px] right-[3px] h-[2px] bg-[#76b9ed]" />
    </Slot>
    <Slot w={45}>
      <svg width="23" height="22" viewBox="0 0 23 22"><path d="M0 3l13-3v22L0 19z" fill="#2b5797" /><rect x="13" y="3" width="10" height="16" fill="#fff" /><path d="M15 6h6M15 9h6M15 12h6M15 15h6" stroke="#2b5797" /><text x="6.500" y="15" fontSize="10" fontWeight="700" fill="#fff" textAnchor="middle" fontFamily="Liberation Sans">W</text></svg>
    </Slot>
    <Slot w={45} bg="bg-[#5a5c50]">
      <svg width="23" height="22" viewBox="0 0 23 22"><path d="M0 3l13-3v22L0 19z" fill="#1d7044" /><rect x="13" y="3" width="10" height="16" fill="#fff" /><path d="M15 6h6M15 9h6M15 12h6M15 15h6M18 4v13" stroke="#1d7044" /><text x="6.500" y="15" fontSize="10" fontWeight="700" fill="#fff" textAnchor="middle" fontFamily="Liberation Sans">X</text></svg>
      <span className="absolute bottom-0 left-0 right-0 h-[2px] bg-[#76b9ed]" />
    </Slot>
    <Slot w={45}>
      <svg width="20" height="20" viewBox="0 0 20 20" fill="none" stroke="#fff"><circle cx="10" cy="10" r="5.500" strokeWidth="3" /><path d="M10 0v4M10 16v4M0 10h4M16 10h4M3 3l3 3M14 14l3 3M17 3l-3 3M6 14l-3 3" strokeWidth="3" /></svg>
      <span className="absolute bottom-0 left-[3px] right-[5px] h-[2px] bg-[#76b9ed]" />
    </Slot>
    <div className="flex-1 flex items-center text-[13.5px]">
      <svg className="ml-[23px]" width="24" height="24" viewBox="0 0 24 24"><path d="M6 2a7 7 0 0 0 4 10 7 7 0 0 0 5-2C11 10 8 7 9 2z" fill="#f5c518" /><path d="M7 22a4 4 0 0 1-1-8 6 6 0 0 1 11-2 5 5 0 0 1 3 10z" fill="#cfe3f4" /></svg>
      <span className="ml-[9px] w-[44px]">18°C</span>
      <ChevronUp size={16} strokeWidth={1.4} className="ml-[2px]" />
      <svg className="ml-[9px]" width="14" height="14" viewBox="0 0 14 14" fill="none" stroke="#ddd"><path d="M1 13c0-6 5-12 12-12M4 13c0-5 4-9 9-9M7 13c0-3 3-6 6-6" /><circle cx="12" cy="12" r="1.500" fill="#fff" /></svg>
      <svg className="ml-[9px]" width="16" height="14" viewBox="0 0 16 14" fill="none" stroke="#fff"><rect x="5.500" y="3.500" width="9" height="7" /><path d="M15.500 6v2" /><path d="M1 5h3M1 9h3M2 1v3M4 1v3" /></svg>
      <svg className="ml-[8px]" width="14" height="14" viewBox="0 0 14 14" fill="none" stroke="#fff"><path d="M1 5h3l4-4v12L4 9H1zM10 4.500c1 1.500 1 3.500 0 5M12 3c2 2 2 6 0 8" /></svg>
      <svg className="ml-[11px]" width="15" height="17" viewBox="0 0 15 17"><path d="M1 2l5-2 6 2v7c0 4-6 7-6 7S1 13 1 9z" fill="#fff" /><path d="M6 1v14M1 7h10" stroke="#28291e" /><path d="M10 9l5 8H5z" fill="#f5b800" /></svg>
      <div className="-ml-[1px] w-[75px] flex flex-col items-center text-[12.5px] leading-[19px]">
        <span>06:52 AM</span><span>20-Feb-22</span>
      </div>
      <svg className="ml-[8px]" width="16" height="16" viewBox="0 0 16 16" fill="none" stroke="#fff"><path d="M.5.5h15v11h-5l-2.500 3-2.500-3h-5z" /></svg>
    </div>
  </div>
);

export default function App() {
  return (
    <div className="relative w-[1600px] h-[900px] overflow-hidden flex flex-col bg-white tracking-[-0.3px] font-['Open_Sans',sans-serif]">
      <TitleBar />
      <Ribbon />
      <FormulaBar />
      <Sheet />
      <SheetBar />
      <StatusBar />
      <Taskbar />
      <Flyout />
    </div>
  );
}
